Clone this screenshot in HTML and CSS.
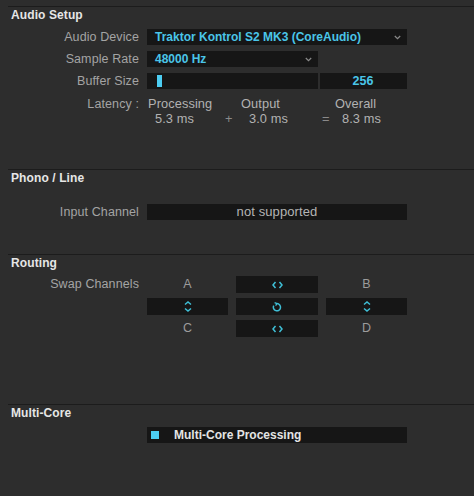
FILE: index.html
```html
<!DOCTYPE html>
<html>
<head>
<meta charset="utf-8">
<link rel="stylesheet" href="styles.css">
</head>
<body>
<div class="panel">
  <section class="sec sec-audio">
    <h2 class="head">Audio Setup</h2>
    <div class="rows">
      <div class="row">
        <span class="lbl">Audio Device</span>
        <div class="box select">
          <span class="val">Traktor Kontrol S2 MK3 (CoreAudio)</span>
          <svg class="chev" width="7" height="5" viewBox="0 0 7 5"><polyline points="0.8,1 3.5,3.7 6.2,1" fill="none" stroke="#8a8a8a" stroke-width="1.2"/></svg>
        </div>
      </div>
      <div class="row">
        <span class="lbl">Sample Rate</span>
        <div class="box select short">
          <span class="val">48000 Hz</span>
          <svg class="chev" width="7" height="5" viewBox="0 0 7 5"><polyline points="0.8,1 3.5,3.7 6.2,1" fill="none" stroke="#8a8a8a" stroke-width="1.2"/></svg>
        </div>
      </div>
      <div class="row">
        <span class="lbl">Buffer Size</span>
        <div class="pair">
          <div class="box slider"><span class="handle"></span></div>
          <div class="box num"><span class="val">256</span></div>
        </div>
      </div>
      <div class="row latency">
        <span class="lbl">Latency :</span>
        <div class="lat">
          <div class="lat-heads">
            <span class="lh1">Processing</span>
            <span>Output</span>
            <span>Overall</span>
          </div>
          <div class="lat-vals">
            <span class="lv1">5.3 ms</span>
            <span class="op">+</span>
            <span>3.0 ms</span>
            <span class="op">=</span>
            <span>8.3 ms</span>
          </div>
        </div>
      </div>
    </div>
  </section>

  <section class="sec sec-phono">
    <h2 class="head">Phono / Line</h2>
    <div class="rows">
      <div class="row">
        <span class="lbl">Input Channel</span>
        <div class="box center"><span class="plain">not supported</span></div>
      </div>
    </div>
  </section>

  <section class="sec sec-routing">
    <h2 class="head">Routing</h2>
    <div class="rows">
      <div class="row swaprow">
        <span class="lbl">Swap Channels</span>
        <div class="swap">
          <span class="ch">A</span>
          <div class="box icon">
            <svg width="11" height="8" viewBox="0 0 11 8"><polyline points="3.5,1 1,4 3.5,7" fill="none" stroke="#3fbfd6" stroke-width="1.5"/><polyline points="7.5,1 10,4 7.5,7" fill="none" stroke="#3fbfd6" stroke-width="1.5"/></svg>
          </div>
          <span class="ch">B</span>
          <div class="box icon">
            <svg width="8" height="11" viewBox="0 0 8 11"><polyline points="1,3.5 4,1 7,3.5" fill="none" stroke="#3fbfd6" stroke-width="1.5"/><polyline points="1,7.5 4,10 7,7.5" fill="none" stroke="#3fbfd6" stroke-width="1.5"/></svg>
          </div>
          <div class="box icon">
            <svg width="10" height="10" viewBox="0 0 10 10"><path d="M5 1.6 A3.6 3.6 0 1 1 1.7 3.6" fill="none" stroke="#3fbfd6" stroke-width="1.5"/><polyline points="2.6,0.6 5,1.6 3.6,3.6" fill="none" stroke="#3fbfd6" stroke-width="1.3"/></svg>
          </div>
          <div class="box icon">
            <svg width="8" height="11" viewBox="0 0 8 11"><polyline points="1,3.5 4,1 7,3.5" fill="none" stroke="#3fbfd6" stroke-width="1.5"/><polyline points="1,7.5 4,10 7,7.5" fill="none" stroke="#3fbfd6" stroke-width="1.5"/></svg>
          </div>
          <span class="ch">C</span>
          <div class="box icon">
            <svg width="11" height="8" viewBox="0 0 11 8"><polyline points="3.5,1 1,4 3.5,7" fill="none" stroke="#3fbfd6" stroke-width="1.5"/><polyline points="7.5,1 10,4 7.5,7" fill="none" stroke="#3fbfd6" stroke-width="1.5"/></svg>
          </div>
          <span class="ch">D</span>
        </div>
      </div>
    </div>
  </section>

  <section class="sec sec-multi">
    <h2 class="head">Multi-Core</h2>
    <div class="rows">
      <div class="row">
        <span class="lbl"></span>
        <div class="box check"><span class="cb"></span><span class="cbtext">Multi-Core Processing</span></div>
      </div>
    </div>
  </section>
</div>
</body>
</html>
```

FILE: styles.css
```css
html, body {
  margin: 0;
  padding: 0;
  background: #2d2d2d;
}
body {
  width: 474px;
  height: 496px;
  overflow: hidden;
  font-family: "Liberation Sans", Arial, sans-serif;
  font-size: 12px;
  color: #a6a6a6;
}
.panel {
  padding-top: 6px;
}
.sec {
  margin-left: 8px;
  border-top: 1px solid #1c1c1c;
  box-sizing: border-box;
}
.sec-audio { height: 163px; }
.sec-phono { height: 85px; }
.sec-routing { height: 150px; }
.sec-multi { height: 92px; }

.head {
  margin: 0;
  padding: 1px 0 0 3px;
  font-size: 12px;
  line-height: 14px;
  font-weight: bold;
  color: #e6e6e6;
  letter-spacing: 0.1px;
}
.rows {
  display: flex;
  flex-direction: column;
  gap: 6px;
  margin-top: 7px;
}
.sec-phono .rows { margin-top: 19px; }
.sec-routing .rows { margin-top: 6px; }

.row {
  display: grid;
  grid-template-columns: 131px 260px;
  column-gap: 8px;
  align-items: start;
}
.lbl {
  text-align: right;
  font-size: 12.5px;
  line-height: 16px;
  color: #a4a4a4;
  letter-spacing: 0.1px;
}
.box {
  height: 16px;
  background: #161616;
  display: flex;
  align-items: center;
  box-sizing: border-box;
}
.val {
  font-weight: bold;
  color: #4ac5e8;
  line-height: 16px;
}
.select {
  padding: 0 6px 0 8px;
  justify-content: space-between;
}
.short { width: 171px; }
.chev { display: block; }
.pair {
  display: grid;
  grid-template-columns: 171px 87px;
  column-gap: 2px;
}
.slider { padding-left: 10px; }
.handle {
  width: 5px;
  height: 12px;
  background: #4ccdf2;
}
.num { justify-content: center; padding-right: 1px; }
.num .val { font-size: 12.5px; }

.latency { margin-top: 2px; }
.latency .lbl { line-height: 14px; }
.lat { color: #b2b2b2; font-size: 12.8px; line-height: 14px; letter-spacing: 0.1px; }
.lat-heads {
  display: grid;
  grid-template-columns: 94px 94px auto;
}
.lh1 { padding-left: 1px; }
.lat-vals {
  display: grid;
  grid-template-columns: 78px 24px 73px 20px auto;
  margin-top: 1px;
}
.lv1 { padding-left: 8px; }
.op { color: #8a8a8a; }

.center { justify-content: center; }
.plain { color: #b4b4b4; font-size: 13px; line-height: 16px; letter-spacing: 0.1px; }

.swaprow .lbl { line-height: 17px; }
.swap {
  display: grid;
  grid-template-columns: 81px 82px 81px;
  grid-template-rows: 17px 17px 17px;
  column-gap: 8px;
  row-gap: 5px;
}
.swap .box { height: 17px; }
.icon { justify-content: center; }
.icon svg { display: block; }
.ch {
  text-align: center;
  font-size: 12.5px;
  line-height: 17px;
  color: #9c9c9c;
}

.check { padding-left: 4px; }
.cb {
  width: 8px;
  height: 8px;
  background: #4ccdf2;
  margin-right: 15px;
}
.cbtext {
  font-weight: bold;
  color: #e4e4e4;
  line-height: 16px;
}
```
